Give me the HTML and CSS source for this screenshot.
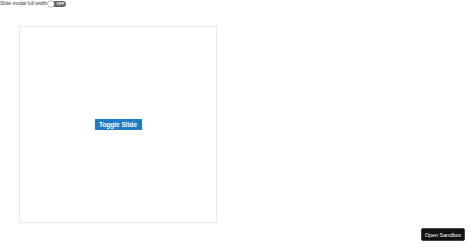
FILE: index.html
```html
<!DOCTYPE html>
<html>
<head>
<meta charset="utf-8">
<link rel="stylesheet" href="styles.css">
</head>
<body>
<div class="top">
  <span class="label">Slide modal full width</span>
  <span class="switch"><span class="knob"></span><span class="off">OFF</span></span>
</div>
<div class="stage">
  <div class="box">
    <button class="toggle">Toggle Slide</button>
  </div>
</div>
<button class="sandbox">Open Sandbox</button>
</body>
</html>
```
FILE: styles.css
```css
html, body { margin: 0; padding: 0; background: #fff; }
body { font-family: "Liberation Sans", Arial, sans-serif; width: 474px; height: 248px; position: relative; overflow: hidden; }
.top { display: flex; align-items: center; height: 7px; font-size: 5px; color: #333; line-height: 7px; }
.label { margin-right: 1.5px; }
.switch { position: relative; width: 18px; height: 6px; border-radius: 3px; background: #666; display: inline-flex; align-items: center; justify-content: flex-end; }
.knob { position: absolute; left: 0; top: 0; width: 6px; height: 6px; border-radius: 50%; background: #fff; box-shadow: 0 0 0 0.5px #999; }
.off { color: #fff; font-size: 4px; font-weight: bold; margin-right: 2px; line-height: 6px; }
.stage { padding: 19px 0 0 19px; }
.box { width: 196px; height: 195px; border: 1.5px solid #e8e8e8; display: flex; align-items: center; justify-content: center; }
.toggle { border: 0; background: #1f7bc6; color: #fff; font-family: "Liberation Sans", Arial, sans-serif; font-weight: bold; font-size: 6.5px; width: 47px; height: 11px; padding: 0; }
.sandbox { position: absolute; left: 421px; top: 228px; width: 44px; height: 13px; border: 0.5px solid #444; border-radius: 2px; background: #111; color: #fff; font-family: "Liberation Sans", Arial, sans-serif; font-size: 5.5px; padding: 0; }
```
